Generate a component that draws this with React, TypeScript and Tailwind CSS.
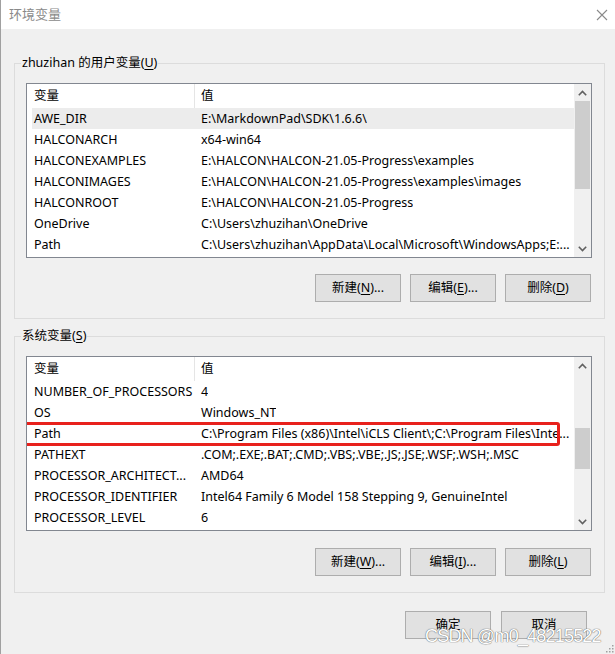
import React from 'react';

type Row = { name: string; value: string };

const userVars: Row[] = [
  { name: 'AWE_DIR', value: 'E:\\MarkdownPad\\SDK\\1.6.6\\' },
  { name: 'HALCONARCH', value: 'x64-win64' },
  { name: 'HALCONEXAMPLES', value: 'E:\\HALCON\\HALCON-21.05-Progress\\examples' },
  { name: 'HALCONIMAGES', value: 'E:\\HALCON\\HALCON-21.05-Progress\\examples\\images' },
  { name: 'HALCONROOT', value: 'E:\\HALCON\\HALCON-21.05-Progress' },
  { name: 'OneDrive', value: 'C:\\Users\\zhuzihan\\OneDrive' },
  { name: 'Path', value: 'C:\\Users\\zhuzihan\\AppData\\Local\\Microsoft\\WindowsApps;E:...' },
];

const sysVars: Row[] = [
  { name: 'NUMBER_OF_PROCESSORS', value: '4' },
  { name: 'OS', value: 'Windows_NT' },
  { name: 'Path', value: 'C:\\Program Files (x86)\\Intel\\iCLS Client\\;C:\\Program Files\\Inte...' },
  { name: 'PATHEXT', value: '.COM;.EXE;.BAT;.CMD;.VBS;.VBE;.JS;.JSE;.WSF;.WSH;.MSC' },
  { name: 'PROCESSOR_ARCHITECT...', value: 'AMD64' },
  { name: 'PROCESSOR_IDENTIFIER', value: 'Intel64 Family 6 Model 158 Stepping 9, GenuineIntel' },
  { name: 'PROCESSOR_LEVEL', value: '6' },
];

const Chevron = ({ down }: { down?: boolean }) => (
  <svg width="9" height="6" viewBox="0 0 9 6" className={down ? 'rotate-180' : ''}>
    <path d="M0.8 5.2 L4.5 1.5 L8.2 5.2" fill="none" stroke="#606060" strokeWidth="1.6" />
  </svg>
);

const ScrollBar = ({ thumbTop, thumbHeight }: { thumbTop: number; thumbHeight: number }) => (
  <div className="w-[17px] flex-shrink-0 bg-[#f0f0f0] flex flex-col">
    <div className="h-[17px] flex items-center justify-center">
      <Chevron />
    </div>
    <div className="flex-1 flex flex-col">
      <div style={{ height: thumbTop }} />
      <div className="bg-[#cdcdcd] mx-[1px]" style={{ height: thumbHeight }} />
    </div>
    <div className="h-[17px] flex items-center justify-center">
      <Chevron down />
    </div>
  </div>
);

const VarList = ({
  rows,
  selected,
  marked,
  thumbTop,
  thumbHeight,
}: {
  rows: Row[];
  selected?: number;
  marked?: number;
  thumbTop: number;
  thumbHeight: number;
}) => (
  <div className="ml-[11px] mr-[12px] h-[175px] border border-[#828790] bg-white flex">
    <div className="flex-1 min-w-0 flex flex-col overflow-hidden">
      <div className="h-[24px] flex items-center flex-shrink-0">
        <div className="w-[168px] h-full pl-[7px] flex items-center border-r border-[#e5e5e5]">变量</div>
        <div className="pl-[6px]">值</div>
      </div>
      {rows.map((r, i) => (
        <div
          key={r.name + i}
          className={`h-[21px] pt-[1px] flex items-center flex-shrink-0 ml-[5px] relative ${
            i === selected ? 'bg-[#ececec]' : ''
          }`}
        >
          <div className="w-[163px] flex-shrink-0 pl-[2px] whitespace-nowrap overflow-hidden">{r.name}</div>
          <div className="pl-[6px] whitespace-nowrap overflow-hidden">{r.value}</div>
          {i === marked && (
            <div className="absolute left-[-9px] top-[-1px] w-[537px] h-[24px] border-[3px] border-[#e8211c] rounded-[3px]" />
          )}
        </div>
      ))}
    </div>
    <ScrollBar thumbTop={thumbTop} thumbHeight={thumbHeight} />
  </div>
);

const Btn = ({ children }: { children: React.ReactNode }) => (
  <button className="w-[86px] h-[28px] bg-[#e1e1e1] border border-[#adadad] flex items-center justify-center">
    {children}
  </button>
);

const U = ({ c }: { c: string }) => <span className="underline underline-offset-2">{c}</span>;

const Group = ({ label, children }: { label: React.ReactNode; children: React.ReactNode }) => (
  <fieldset className="ml-[13px] mr-[10px] min-w-0 border border-[#dcdcdc] pt-[12px] pb-[16px]">
    <legend className="ml-[6px] px-[1px] h-[16px] leading-[16px]">{label}</legend>
    {children}
  </fieldset>
);

export default function App() {
  return (
    <div
      className="w-[615px] h-[654px] bg-[#f0f0f0] border-l border-[#a0a0a0] relative overflow-hidden text-[12.5px] text-black"
      style={{ fontFamily: '"Noto Sans", "Noto Sans CJK SC", sans-serif' }}
    >
      <div className="h-[29px] bg-white flex items-center justify-between pl-[8px] pr-[7px]">
        <span className="text-[#8a8a8a] text-[13px]">环境变量</span>
        <svg width="12" height="12" viewBox="0 0 12 12">
          <path d="M1 1 L11 11 M11 1 L1 11" stroke="#8a8a8a" strokeWidth="1.1" />
        </svg>
      </div>

      <div className="pt-[26px]">
        <Group label={<>zhuzihan 的用户变量(<U c="U" />)</>}>
          <VarList rows={userVars} selected={0} thumbTop={0} thumbHeight={88} />
          <div className="flex justify-end gap-[9px] mr-[13px] mt-[16px]">
            <Btn>新建(<U c="N" />)...</Btn>
            <Btn>编辑(<U c="E" />)...</Btn>
            <Btn>删除(<U c="D" />)</Btn>
          </div>
        </Group>

        <div className="h-[9px]" />

        <Group label={<>系统变量(<U c="S" />)</>}>
          <VarList rows={sysVars} marked={2} thumbTop={54} thumbHeight={41} />
          <div className="flex justify-end gap-[9px] mr-[13px] mt-[17px]">
            <Btn>新建(<U c="W" />)...</Btn>
            <Btn>编辑(<U c="I" />)...</Btn>
            <Btn>删除(<U c="L" />)</Btn>
          </div>
        </Group>

        <div className="flex justify-end gap-[10px] mr-[28px] mt-[18px]">
          <Btn>确定</Btn>
          <Btn>取消</Btn>
        </div>
      </div>

      <div
        className="absolute left-[424px] top-[625px] text-[18px] leading-[22px] tracking-[-0.8px] text-white whitespace-nowrap [text-shadow:0_0_1px_#666,0_0_1px_#666]"
        style={{ fontFamily: '"Liberation Sans", Arial, sans-serif' }}
      >
        CSDN @m0_48215522
      </div>

      <svg className="absolute right-[1px] bottom-[1px]" width="10" height="10" viewBox="0 0 10 10">
        {[
          [8, 2],
          [8, 5],
          [5, 5],
          [8, 8],
          [5, 8],
          [2, 8],
        ].map(([x, y]) => (
          <rect key={`${x}-${y}`} x={x} y={y} width="1.5" height="1.5" fill="#a0a0a0" />
        ))}
      </svg>
    </div>
  );
}
